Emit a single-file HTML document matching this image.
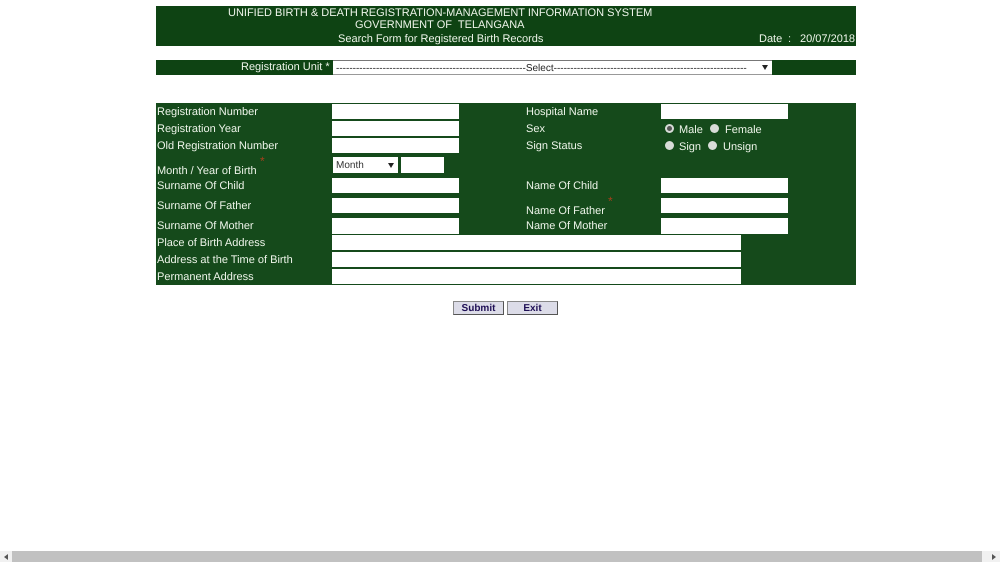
<!DOCTYPE html>
<html>
<head>
<meta charset="utf-8">
<style>
html,body{margin:0;padding:0;width:1000px;height:562px;overflow:hidden;background:#fff;}
body{position:relative;font-family:"Liberation Sans",Arial,sans-serif;text-rendering:geometricPrecision;}
.g{position:absolute;background:#154a1b;}
.t{position:absolute;color:#eef5ea;font-size:11px;line-height:14px;white-space:pre;}
.i{position:absolute;background:#fff;height:15px;width:127px;left:332px;}
.r{left:661px;}
.w{width:409px;}
.s{position:absolute;color:#a5401c;font-size:12px;line-height:12px;}
.ra{position:absolute;width:9px;height:9px;border-radius:50%;background:#d8dcd8;}
.ra.c:after{content:"";position:absolute;left:2px;top:2px;width:5px;height:5px;border-radius:50%;background:#555;}
.b{position:absolute;top:301px;height:12px;width:49px;background:#dcdce8;border:1px solid #555;border-left-color:#888;border-top-color:#888;color:#1f0f55;font:bold 10px/13px "Liberation Sans",Arial,sans-serif;text-align:center;}
</style>
</head>
<body>
<div class="g" style="left:156px;top:6px;width:700px;height:40px;background:#0e4313;"></div>
<div class="t" style="left:228px;top:6px;">UNIFIED BIRTH &amp; DEATH REGISTRATION-MANAGEMENT INFORMATION SYSTEM</div>
<div class="t" style="left:355px;top:18px;">GOVERNMENT OF  TELANGANA</div>
<div class="t" style="left:338px;top:32px;">Search Form for Registered Birth Records</div>
<div class="t" style="left:759px;top:32px;">Date</div>
<div class="t" style="left:788px;top:32px;">:</div>
<div class="t" style="left:800px;top:32px;">20/07/2018</div>

<div class="g" style="left:156px;top:60px;width:700px;height:15px;background:#0e4313;"></div>
<div class="t" style="left:241px;top:60px;">Registration Unit *</div>
<div style="position:absolute;left:333px;top:60px;width:439px;height:15px;background:#fff;border-top:1px solid #777;border-bottom:1px solid #999;box-sizing:border-box;"></div>
<div style="position:absolute;left:336px;top:62px;font-size:10px;line-height:13px;color:#222;white-space:pre;width:412px;overflow:hidden;">---------------------------------------------------------Select----------------------------------------------------------</div>
<div style="position:absolute;left:762px;top:65px;width:0;height:0;border-left:3px solid transparent;border-right:3px solid transparent;border-top:5px solid #222;"></div>

<div class="g" style="left:156px;top:103px;width:700px;height:182px;"></div>

<div class="t" style="left:157px;top:105px;">Registration Number</div>
<div class="t" style="left:157px;top:122px;">Registration Year</div>
<div class="t" style="left:157px;top:139px;">Old Registration Number</div>
<div class="t" style="left:157px;top:164px;">Month / Year of Birth</div>
<div class="s" style="left:260px;top:155px;">*</div>
<div class="t" style="left:157px;top:179px;">Surname Of Child</div>
<div class="t" style="left:157px;top:199px;">Surname Of Father</div>
<div class="t" style="left:157px;top:219px;">Surname Of Mother</div>
<div class="t" style="left:157px;top:236px;">Place of Birth Address</div>
<div class="t" style="left:157px;top:253px;">Address at the Time of Birth</div>
<div class="t" style="left:157px;top:270px;">Permanent Address</div>

<div class="i" style="top:104px;"></div>
<div class="i" style="top:121px;"></div>
<div class="i" style="top:138px;"></div>
<div class="i" style="top:157px;left:333px;width:65px;height:16px;"></div>
<div style="position:absolute;left:336px;top:159px;font-size:10px;line-height:13px;color:#333;">Month</div>
<div style="position:absolute;left:388px;top:163px;width:0;height:0;border-left:3px solid transparent;border-right:3px solid transparent;border-top:5px solid #222;"></div>
<div class="i" style="top:157px;left:401px;width:43px;height:16px;"></div>
<div class="i" style="top:178px;"></div>
<div class="i" style="top:198px;"></div>
<div class="i" style="top:218px;height:16px;"></div>
<div class="i w" style="top:235px;"></div>
<div class="i w" style="top:252px;"></div>
<div class="i w" style="top:269px;"></div>

<div class="t" style="left:526px;top:105px;">Hospital Name</div>
<div class="t" style="left:526px;top:122px;">Sex</div>
<div class="t" style="left:526px;top:139px;">Sign Status</div>
<div class="t" style="left:526px;top:179px;">Name Of Child</div>
<div class="t" style="left:526px;top:204px;">Name Of Father</div>
<div class="s" style="left:608px;top:195px;">*</div>
<div class="t" style="left:526px;top:219px;">Name Of Mother</div>

<div class="i r" style="top:104px;"></div>
<div class="i r" style="top:178px;"></div>
<div class="i r" style="top:198px;"></div>
<div class="i r" style="top:218px;height:16px;"></div>

<div class="ra c" style="left:664.5px;top:123.5px;"></div>
<div class="t" style="left:679px;top:123px;">Male</div>
<div class="ra" style="left:710px;top:123.5px;"></div>
<div class="t" style="left:725px;top:123px;">Female</div>
<div class="ra" style="left:664.5px;top:140.5px;"></div>
<div class="t" style="left:679px;top:140px;">Sign</div>
<div class="ra" style="left:708px;top:140.5px;"></div>
<div class="t" style="left:723px;top:140px;">Unsign</div>

<div class="b" style="left:453px;">Submit</div>
<div class="b" style="left:507px;">Exit</div>

<div style="position:absolute;left:0;top:551px;width:1000px;height:11px;background:#f1f1f1;"></div>
<div style="position:absolute;left:12px;top:551px;width:970px;height:11px;background:#c1c1c1;"></div>
<div style="position:absolute;left:4px;top:554px;width:0;height:0;border-top:3px solid transparent;border-bottom:3px solid transparent;border-right:4px solid #555;"></div>
<div style="position:absolute;left:992px;top:554px;width:0;height:0;border-top:3px solid transparent;border-bottom:3px solid transparent;border-left:4px solid #555;"></div>
</body>
</html>
